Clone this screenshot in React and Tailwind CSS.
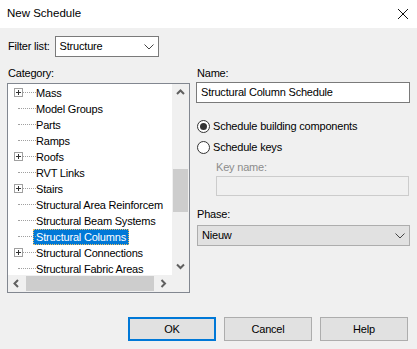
import React from "react";

const rows = [
  { label: "Mass", plus: true },
  { label: "Model Groups" },
  { label: "Parts" },
  { label: "Ramps" },
  { label: "Roofs", plus: true },
  { label: "RVT Links" },
  { label: "Stairs", plus: true },
  { label: "Structural Area Reinforcem" },
  { label: "Structural Beam Systems" },
  { label: "Structural Columns", selected: true },
  { label: "Structural Connections", plus: true },
  { label: "Structural Fabric Areas" },
];

function Chevron({ className = "" }) {
  return (
    <svg width="10" height="6" viewBox="0 0 10 6" className={className}>
      <path d="M0.5 0.5 L5 5 L9.5 0.5" fill="none" stroke="#444" strokeWidth="1" />
    </svg>
  );
}

function Arrow({ dir }) {
  const paths = {
    up: "M1 5 L4.5 1.5 L8 5",
    down: "M1 1.5 L4.5 5 L8 1.5",
    left: "M5 1 L1.5 4.5 L5 8",
    right: "M1.5 1 L5 4.5 L1.5 8",
  };
  const vert = dir === "up" || dir === "down";
  return (
    <svg width={vert ? 9 : 7} height={vert ? 7 : 9} viewBox={vert ? "0 0 9 7" : "0 0 7 9"}>
      <path d={paths[dir]} fill="none" stroke="#606060" strokeWidth="2" />
    </svg>
  );
}

function TreeRow({ label, plus, selected }) {
  return (
    <div className="relative h-[16px] flex items-center whitespace-nowrap">
      {plus ? (
        <div className="absolute left-[6px] top-[3px] w-[9px] h-[9px] border border-[#a0a0a0] bg-white flex items-center justify-center">
          <div className="relative w-[5px] h-[5px]">
            <div className="absolute left-0 top-[2px] w-[5px] h-[1px] bg-[#333]" />
            <div className="absolute left-[2px] top-0 w-[1px] h-[5px] bg-[#333]" />
          </div>
        </div>
      ) : null}
      <div
        className={`absolute top-[7px] h-0 border-t border-dotted border-[#a0a0a0] ${plus ? "left-[15px] w-[13px]" : "left-[10px] w-[18px]"}`}
      />
      <div
        className={`ml-[25px] h-[16px] flex items-center px-[3px] ${selected ? "bg-[#0078d7] text-white outline outline-1 outline-dotted outline-[#f0c060] -outline-offset-1" : "text-black"}`}
      >
        {label}
      </div>
    </div>
  );
}

export default function App() {
  return (
    <div
      className="w-[417px] h-[349px] bg-[#f0f0f0] text-[11px] tracking-[-0.2px] text-black overflow-hidden flex flex-col"
      style={{ fontFamily: '"Liberation Sans", Arial, sans-serif' }}
    >
      {/* title bar */}
      <div className="h-[28px] bg-white flex items-center justify-between pl-[7px] pr-[7px] shrink-0">
        <span className="text-[11.5px] tracking-normal leading-none">New Schedule</span>
        <svg width="12" height="12" viewBox="0 0 12 12" className="mr-[1px]">
          <path d="M1 1 L11 11 M11 1 L1 11" stroke="#111" strokeWidth="1" />
        </svg>
      </div>

      <div className="flex flex-col px-[7px] pt-[8px]">
        {/* filter */}
        <div className="flex items-center gap-[5px] h-[21px]">
          <span className="pl-[1px]">Filter list:</span>
          <div className="w-[104px] h-[21px] border border-[#7a7a7a] bg-white flex items-center justify-between pl-[4px] pr-[4px]">
            <span>Structure</span>
            <Chevron />
          </div>
        </div>

        <div className="flex gap-[6px] mt-[8px]">
          {/* left */}
          <div className="flex flex-col w-[183px]">
            <span className="pl-[1px] h-[18px] leading-[16px]">Category:</span>
            <div className="h-[210px] border border-[#828790] bg-white flex flex-col">
              <div className="flex flex-1 min-h-0">
                <div className="flex-1 overflow-hidden pt-[1px]">
                  {rows.map((r) => (
                    <TreeRow key={r.label} {...r} />
                  ))}
                </div>
                <div className="w-[17px] bg-[#f0f0f0] flex flex-col">
                  <div className="h-[17px] flex items-center justify-center">
                    <Arrow dir="up" />
                  </div>
                  <div className="flex-1 flex flex-col px-[1px]">
                    <div className="h-[68px]" />
                    <div className="h-[43px] bg-[#cdcdcd]" />
                  </div>
                  <div className="h-[17px] flex items-center justify-center">
                    <Arrow dir="down" />
                  </div>
                </div>
              </div>
              <div className="h-[17px] flex shrink-0">
                <div className="flex-1 bg-[#f0f0f0] flex">
                  <div className="w-[17px] flex items-center justify-center">
                    <Arrow dir="left" />
                  </div>
                  <div className="flex-1 py-[1px] px-[1px]">
                    <div className="h-full bg-[#cdcdcd]" />
                  </div>
                  <div className="w-[17px] flex items-center justify-center">
                    <Arrow dir="right" />
                  </div>
                </div>
                <div className="w-[17px] bg-[#f0f0f0]" />
              </div>
            </div>
          </div>

          {/* right */}
          <div className="flex flex-col w-[214px]">
            <span className="pl-[1px] h-[17px] leading-[16px]">Name:</span>
            <div className="h-[21px] border border-[#7a7a7a] bg-white flex items-center pl-[4px]">
              Structural Column Schedule
            </div>

            <div className="flex items-center h-[20px] mt-[13px] gap-[3px]">
              <div className="w-[13px] h-[13px] rounded-full border border-[#333] bg-white flex items-center justify-center ml-[1px]">
                <div className="w-[7px] h-[7px] rounded-full bg-[#333]" />
              </div>
              <span>Schedule building components</span>
            </div>
            <div className="flex items-center h-[20px] mt-[1px] gap-[3px]">
              <div className="w-[13px] h-[13px] rounded-full border border-[#333] bg-white ml-[1px]" />
              <span>Schedule keys</span>
            </div>

            <div className="pl-[20px] flex flex-col">
              <span className="text-[#8c8c8c] h-[18px] leading-[18px] mt-[1px]">Key name:</span>
              <div className="h-[20px] border border-[#cccccc] bg-[#f0f0f0] mr-[1px]" />
            </div>

            <span className="pl-[1px] h-[18px] leading-[18px] mt-[9px]">Phase:</span>
            <div className="h-[21px] mt-[2px] border border-[#adadad] bg-[#e1e1e1] flex items-center justify-between pl-[4px] pr-[4px] ml-[1px]">
              <span>Nieuw</span>
              <Chevron />
            </div>
          </div>
        </div>

        {/* buttons */}
        <div className="flex justify-end gap-[8px] mt-[24px] pr-[2px]">
          <div className="w-[88px] h-[24px] border-2 border-[#0078d7] bg-[#e1e1e1] flex items-center justify-center">
            OK
          </div>
          <div className="w-[88px] h-[24px] border border-[#adadad] bg-[#e1e1e1] flex items-center justify-center">
            Cancel
          </div>
          <div className="w-[88px] h-[24px] border border-[#adadad] bg-[#e1e1e1] flex items-center justify-center">
            Help
          </div>
        </div>
      </div>
    </div>
  );
}
